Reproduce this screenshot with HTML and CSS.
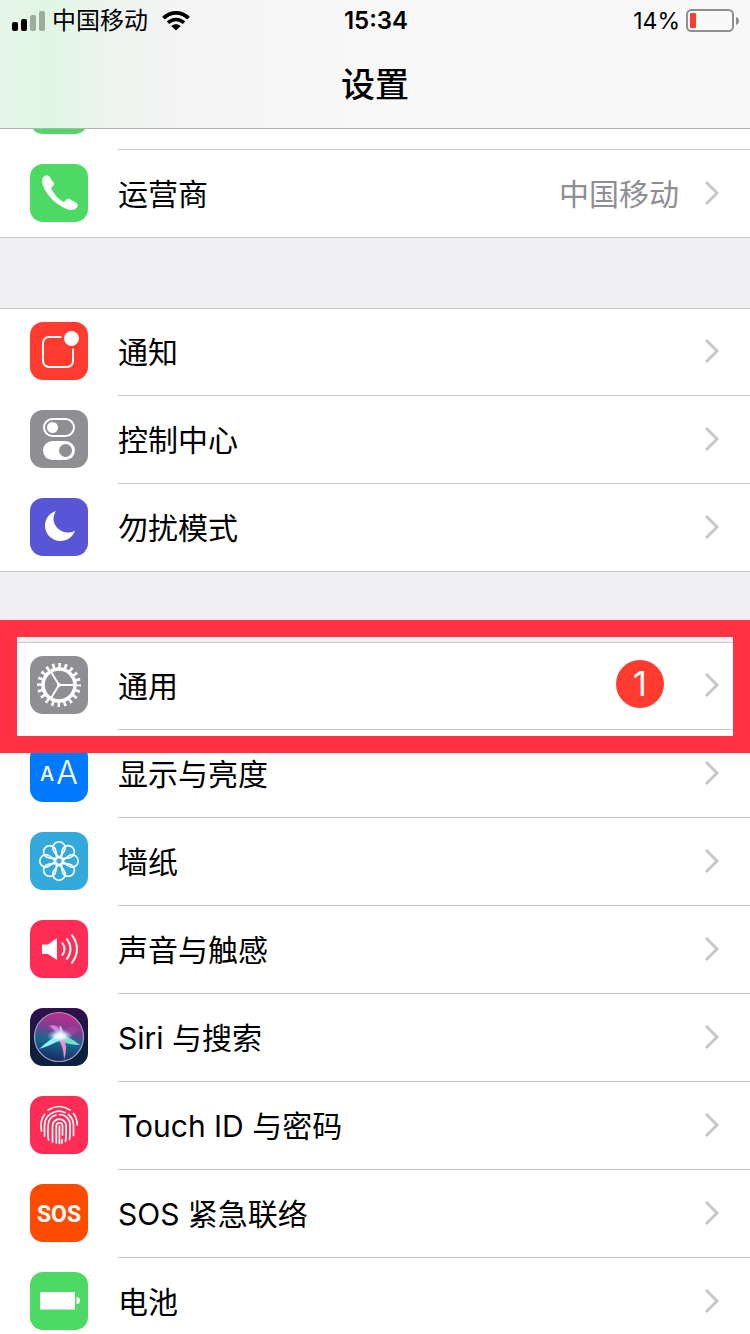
FILE: index.html
```html
<!DOCTYPE html>
<html lang="zh-CN">
<head>
    <meta charset="UTF-8">
    <meta name="viewport" content="width=device-width, initial-scale=1.0">
    <title>设置</title>
    <link rel="stylesheet" href="styles.css">
</head>
<body>

    <header class="header">
        <div class="status-bar">
            <div class="status-left">
                <svg class="signal" width="34" height="22" viewBox="0 0 34 22">
                    <rect x="0" y="12" width="6" height="9" rx="2" />
                    <rect x="9" y="9" width="6" height="12" rx="2" />
                    <rect x="18" y="5" width="6" height="16" rx="2" opacity="0.3" />
                    <rect x="27" y="1" width="6" height="20" rx="2" opacity="0.3" />
                </svg>
                <span class="carrier">中国移动</span>
                <svg class="wifi" width="28" height="20" viewBox="0 0 28 20">
                    <path d="M1.500 7.200C8.500 .2 19.500 .2 26.500 7.200" fill="none" stroke="#000" stroke-width="3.800" />
                    <path d="M6 11.800C10.500 7.400 17.500 7.400 22 11.800" fill="none" stroke="#000" stroke-width="3.600" />
                    <path d="M9.300 15C12 12.600 16 12.600 18.700 15L14 19.600Z" />
                </svg>
            </div>
            <span class="time">15:34</span>
            <div class="status-right">
                <span class="percent">14%</span>
                <svg width="54" height="24" viewBox="0 0 54 24">
                    <rect x="1" y="1" width="46" height="21" rx="4.500" fill="none" stroke="#8e8e90" stroke-width="2" />
                    <rect x="4" y="4" width="6" height="15" rx="1" fill="#ff3b30" />
                    <path d="M50 8C54 9 54 14.500 50 16Z" fill="#8e8e90" />
                </svg>
            </div>
        </div>
        <h1 class="title">设置</h1>
    </header>

    <main class="list">
        <section class="group">
            <div class="row row-cut">
                <span class="icon green"></span>
                <div class="row-body"></div>
            </div>
            <a class="row" href="#">
                <svg class="icon green" viewBox="0 0 58 58">
                    <path fill="#fff" d="M12.500 15C13 12 17 10 19 12L23.500 18.500C24.500 20 24 21.500 22.500 22.500L21 24C23 29 29 36 34 38L36 36C37 34.800 38.500 34.500 40 35.300L46.500 39C48.500 40 48 42 47 43.500C45 46 41 46.500 38 45.500C27 42 16 31 12.800 21C12 18.500 12 16.500 12.500 15Z" />
                </svg>
                <div class="row-body">
                    <span class="label">运营商</span>
                    <span class="value">中国移动</span>
                    <svg class="chevron" viewBox="0 0 16 26"><path d="M2 2L13 13L2 24" /></svg>
                </div>
            </a>
        </section>

        <section class="group">
            <a class="row" href="#">
                <svg class="icon red" viewBox="0 0 58 58">
                    <rect x="13" y="15" width="30" height="30" rx="6" fill="none" stroke="#fff" stroke-width="2" />
                    <circle cx="41.500" cy="16.500" r="10.500" fill="#ff3b30" />
                    <circle cx="41.500" cy="16.500" r="7.500" fill="#fff" />
                </svg>
                <div class="row-body">
                    <span class="label">通知</span>
                    <svg class="chevron" viewBox="0 0 16 26"><path d="M2 2L13 13L2 24" /></svg>
                </div>
            </a>
            <a class="row" href="#">
                <svg class="icon gray" viewBox="0 0 58 58">
                    <rect x="14" y="9" width="30" height="17" rx="8.500" fill="none" stroke="#fff" stroke-width="2" />
                    <circle cx="22.500" cy="17.500" r="5.500" fill="#fff" />
                    <rect x="13" y="31" width="32" height="19" rx="9.500" fill="#fff" />
                    <circle cx="35.500" cy="40.500" r="6.500" fill="#8e8e93" />
                </svg>
                <div class="row-body">
                    <span class="label">控制中心</span>
                    <svg class="chevron" viewBox="0 0 16 26"><path d="M2 2L13 13L2 24" /></svg>
                </div>
            </a>
            <a class="row" href="#">
                <svg class="icon purple" viewBox="0 0 58 58">
                    <path fill="#fff" d="M26 13C19 15 15 21 15 28C15 36 22 43 30 43C37 43 43 39 45 32.500C43 34 41 34.500 38 34.500C30 34.500 23.500 28 23.500 21C23.500 18 24.500 15 26 13Z" />
                </svg>
                <div class="row-body">
                    <span class="label">勿扰模式</span>
                    <svg class="chevron" viewBox="0 0 16 26"><path d="M2 2L13 13L2 24" /></svg>
                </div>
            </a>
        </section>

        <section class="group">
            <a class="row highlighted" href="#">
                <svg class="icon gray" viewBox="0 0 58 58">
                    <g fill="none" stroke="#fff">
                        <circle cx="29" cy="29" r="19.500" stroke-width="5" stroke-dasharray="2.600 3.526" stroke-dashoffset="1.300" />
                        <circle cx="29" cy="29" r="16" stroke-width="3.600" />
                        <path d="M29 29H44M29 29L20.500 15M29 29L20.500 43" stroke-width="2" />
                    </g>
                    <circle cx="29" cy="29" r="2" fill="#fff" />
                </svg>
                <div class="row-body">
                    <span class="label">通用</span>
                    <span class="badge">1</span>
                    <svg class="chevron" viewBox="0 0 16 26"><path d="M2 2L13 13L2 24" /></svg>
                </div>
            </a>
            <a class="row" href="#">
                <svg class="icon blue" viewBox="0 0 58 58">
                    <text class="small-a" x="17" y="37">A</text>
                    <text class="big-a" x="37" y="40">A</text>
                </svg>
                <div class="row-body">
                    <span class="label">显示与亮度</span>
                    <svg class="chevron" viewBox="0 0 16 26"><path d="M2 2L13 13L2 24" /></svg>
                </div>
            </a>
            <a class="row" href="#">
                <svg class="icon cyan" viewBox="0 0 58 58">
                    <defs>
                        <path id="petal" d="M0 -3.500C-3 -7 -6.200 -9.500 -6.200 -13A6.200 6.200 0 0 1 6.200 -13C6.200 -9.500 3 -7 0 -3.500Z" />
                    </defs>
                    <g transform="translate(29 29)" fill="none" stroke="#fff" stroke-width="1.600">
                        <use href="#petal" />
                        <use href="#petal" transform="rotate(45)" />
                        <use href="#petal" transform="rotate(90)" />
                        <use href="#petal" transform="rotate(135)" />
                        <use href="#petal" transform="rotate(180)" />
                        <use href="#petal" transform="rotate(225)" />
                        <use href="#petal" transform="rotate(270)" />
                        <use href="#petal" transform="rotate(315)" />
                        <circle r="3.500" />
                    </g>
                </svg>
                <div class="row-body">
                    <span class="label">墙纸</span>
                    <svg class="chevron" viewBox="0 0 16 26"><path d="M2 2L13 13L2 24" /></svg>
                </div>
            </a>
            <a class="row" href="#">
                <svg class="icon pink" viewBox="0 0 58 58">
                    <path fill="#fff" d="M12 24.500H18L27 18V40L18 34H12Z" />
                    <g fill="none" stroke="#fff" stroke-width="2">
                        <path d="M32 22.500Q37 29 32 35.500" />
                        <path d="M36.500 18.500Q44.500 29 36.500 39.500" />
                        <path d="M41.500 14.500Q52.500 29 41.500 43.500" />
                    </g>
                </svg>
                <div class="row-body">
                    <span class="label">声音与触感</span>
                    <svg class="chevron" viewBox="0 0 16 26"><path d="M2 2L13 13L2 24" /></svg>
                </div>
            </a>
            <a class="row" href="#">
                <svg class="icon siri" viewBox="0 0 58 58">
                    <defs>
                        <linearGradient id="orb" x1="0.600" y1="0" x2="0.400" y2="1">
                            <stop offset="0" stop-color="#c42a86" />
                            <stop offset="0.350" stop-color="#7a3f95" />
                            <stop offset="0.600" stop-color="#18698f" />
                            <stop offset="1" stop-color="#17265f" />
                        </linearGradient>
                        <radialGradient id="glow">
                            <stop offset="0" stop-color="#fff" />
                            <stop offset="0.400" stop-color="#e6fbff" stop-opacity="0.900" />
                            <stop offset="1" stop-color="#6fc8ff" stop-opacity="0" />
                        </radialGradient>
                    </defs>
                    <circle cx="29" cy="29" r="24.500" fill="url(#orb)" stroke="#a5a0c4" stroke-width="1.200" />
                    <path d="M28 27L18 18Q30 14 36 25Z" fill="#d66fc4" opacity="0.500" />
                    <path d="M29 28Q38 15 48 20Q48 28 30 30Z" fill="#b0489c" opacity="0.500" />
                    <path d="M29 27Q25 22 20 17Q30 18 32 27Z" fill="#e8a4e8" opacity="0.700" />
                    <path d="M31 25Q20 31 9 41Q20 38 32 31Z" fill="#8df3f5" />
                    <path d="M28 26Q41 29 50 37Q38 37 28 32Z" fill="#6be6c0" />
                    <path d="M27 29Q34 38 34 52Q39 38 32 27Z" fill="#f28bd0" />
                    <path d="M30 17Q35 23 31 31Q29 25 30 17Z" fill="#dcf6ff" opacity="0.700" />
                    <ellipse cx="30" cy="28" rx="13" ry="7" fill="url(#glow)" />
                </svg>
                <div class="row-body">
                    <span class="label">Siri 与搜索</span>
                    <svg class="chevron" viewBox="0 0 16 26"><path d="M2 2L13 13L2 24" /></svg>
                </div>
            </a>
            <a class="row" href="#">
                <svg class="icon pink" viewBox="0 0 58 58">
                    <g fill="none" stroke="#fff" stroke-width="1.700" stroke-linecap="round">
                        <path d="M18 14Q29 7 40 14" />
                        <path d="M11.500 35Q9.500 25 14.500 18.500" />
                        <path d="M43.500 17.500Q47 22 47.300 29" />
                        <path d="M14.500 40V30A14.500 14.500 0 0 1 35 16.500" />
                        <path d="M38.500 18.500A14.500 14.500 0 0 1 43.500 29V39.500" />
                        <path d="M18.500 44Q17.500 38 18.200 29A11 11 0 0 1 26 19" />
                        <path d="M29.500 18.500A10.500 10.500 0 0 1 40 30Q40.500 38 39.500 43.500" />
                        <path d="M22.500 46V30A6.800 6.800 0 0 1 36.200 30Q36.500 39 35.500 45.500" />
                        <path d="M26.300 47V30A3.100 3.100 0 0 1 32.500 30V39" />
                        <path d="M29.400 30V47.500M32 43.500V47" />
                    </g>
                </svg>
                <div class="row-body">
                    <span class="label">Touch ID 与密码</span>
                    <svg class="chevron" viewBox="0 0 16 26"><path d="M2 2L13 13L2 24" /></svg>
                </div>
            </a>
            <a class="row" href="#">
                <svg class="icon orange" viewBox="0 0 58 58">
                    <text class="sos" x="29" y="38">SOS</text>
                </svg>
                <div class="row-body">
                    <span class="label">SOS 紧急联络</span>
                    <svg class="chevron" viewBox="0 0 16 26"><path d="M2 2L13 13L2 24" /></svg>
                </div>
            </a>
            <a class="row" href="#">
                <svg class="icon green" viewBox="0 0 58 58">
                    <rect x="10" y="20" width="35" height="17.500" fill="#fff" />
                    <path d="M46.500 25Q50 25 50 28.500Q50 32 46.500 32Z" fill="#fff" />
                </svg>
                <div class="row-body">
                    <span class="label">电池</span>
                    <svg class="chevron" viewBox="0 0 16 26"><path d="M2 2L13 13L2 24" /></svg>
                </div>
            </a>
        </section>
    </main>

</body>
</html>
```

FILE: styles.css
```css
*,
*::after {
    box-sizing: border-box;
}

body {
    display: flex;
    flex-direction: column;
    font-family: Inter, 'Noto Sans CJK SC', sans-serif;
    background-color: #efeff4;
    color: #000;
    margin: 0;
    height: 100vh;
}

.header {
    flex-shrink: 0;
    background: linear-gradient(to right, #e6f5e8, #e0f6e3 50px, #eef4ef 110px, #f3f4f3 170px, #f8f8f8 50%);
    border-bottom: 1px solid #b2b2b4;
}

.status-bar {
    display: grid;
    grid-template-columns: 1fr auto 1fr;
    align-items: center;
    height: 42px;
    padding: 0 10px 0 12px;
    font-size: 24px;
    line-height: 42px;
}

.status-left,
.status-right {
    display: flex;
    align-items: center;
}

.status-left {
    gap: 6px;
}

.status-right {
    justify-content: flex-end;
    gap: 6px;
}

.wifi {
    margin-left: 8px;
}

.time {
    font-weight: 600;
}

.percent {
    font-size: 23px;
}

.title {
    margin: 0;
    height: 86px;
    line-height: 86px;
    text-align: center;
    font-size: 34px;
    font-weight: 500;
}

.list {
    flex: 1;
    min-height: 0;
    overflow-y: auto;
    scrollbar-width: none;
}

.group {
    background-color: #fff;
    border-bottom: 1px solid #c8c7cc;
    margin-bottom: 70px;
}

.group:last-child {
    margin-bottom: 0;
}

.group + .group {
    border-top: 1px solid #c8c7cc;
}

.row {
    display: flex;
    align-items: flex-start;
    position: relative;
    gap: 30px;
    height: 88px;
    padding-left: 30px;
    color: #000;
    text-decoration: none;
}

.group + .group .row:first-child,
.row:last-child {
    height: 87px;
}

.row-body {
    display: flex;
    align-items: center;
    flex: 1;
    height: 100%;
    padding-right: 30px;
    border-bottom: 1px solid #c8c7cc;
}

.row:last-child .row-body {
    border-bottom: none;
}

.icon {
    width: 58px;
    height: 58px;
    flex-shrink: 0;
    margin-top: 14px;
    border-radius: 13px;
}

.group + .group .row:first-child .icon {
    margin-top: 13px;
}

/* row scrolled under the header, only its bottom edge shows */
.row-cut {
    height: 21px;
    align-items: flex-end;
    overflow: hidden;
}

.row-cut .icon {
    margin-bottom: 16px;
}

.label {
    flex: 1;
    font-size: 30px;
    line-height: 44px;
}

.value {
    font-size: 30px;
    line-height: 44px;
    color: #8e8e93;
    margin-right: 25px;
}

.chevron {
    width: 16px;
    height: 26px;
    margin-bottom: 2px;
    fill: none;
    stroke: #c7c7cc;
    stroke-width: 3px;
}

.badge {
    width: 48px;
    height: 48px;
    margin-right: 40px;
    margin-bottom: 4px;
    border-radius: 50%;
    background-color: #ff3b30;
    color: #fff;
    font-size: 34px;
    line-height: 48px;
    text-align: center;
}

/* red frame around the row to tap */
.highlighted::after {
    content: '';
    position: absolute;
    top: -23px;
    left: 0;
    right: 0;
    height: 133px;
    border: 17px solid #ff3344;
    z-index: 1;
}

.icon text {
    fill: #fff;
    text-anchor: middle;
}

.small-a {
    font-size: 20px;
    font-weight: 500;
}

.big-a {
    font-size: 32px;
    font-weight: 300;
}

.sos {
    font-family: Roboto, sans-serif;
    font-size: 23px;
    font-weight: 700;
}

.green {
    background-color: #4cd964;
}

.red {
    background-color: #ff3b30;
}

.gray {
    background-color: #8e8e93;
}

.purple {
    background-color: #5856d6;
}

.blue {
    background-color: #007aff;
}

.cyan {
    background-color: #34aadc;
}

.pink {
    background-color: #ff2d55;
}

.orange {
    background-color: #ff4b00;
}

.siri {
    background: linear-gradient(to bottom, #32104e, #101c3c 60%, #0b2240);
}
```
